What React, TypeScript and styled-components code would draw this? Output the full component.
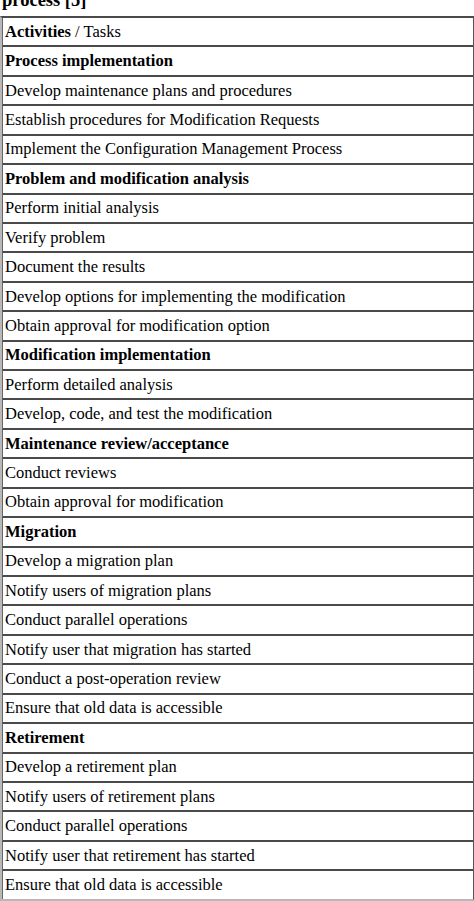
import React from 'react';
import styled, { createGlobalStyle } from 'styled-components';

const GlobalStyle = createGlobalStyle`
	html, body {
		margin: 0;
		padding: 0;
		background: #ffffff;
	}
	body {
		font-family: 'Liberation Serif', 'Times New Roman', serif;
		color: #000000;
		width: 474px;
		height: 901px;
		overflow: hidden;
	}
`;

type Row = { text: string; heading?: boolean };

const rows: Row[] = [
	{ text: 'Process implementation', heading: true },
	{ text: 'Develop maintenance plans and procedures' },
	{ text: 'Establish procedures for Modification Requests' },
	{ text: 'Implement the Configuration Management Process' },
	{ text: 'Problem and modification analysis', heading: true },
	{ text: 'Perform initial analysis' },
	{ text: 'Verify problem' },
	{ text: 'Document the results' },
	{ text: 'Develop options for implementing the modification' },
	{ text: 'Obtain approval for modification option' },
	{ text: 'Modification implementation', heading: true },
	{ text: 'Perform detailed analysis' },
	{ text: 'Develop, code, and test the modification' },
	{ text: 'Maintenance review/acceptance', heading: true },
	{ text: 'Conduct reviews' },
	{ text: 'Obtain approval for modification' },
	{ text: 'Migration', heading: true },
	{ text: 'Develop a migration plan' },
	{ text: 'Notify users of migration plans' },
	{ text: 'Conduct parallel operations' },
	{ text: 'Notify user that migration has started' },
	{ text: 'Conduct a post-operation review' },
	{ text: 'Ensure that old data is accessible' },
	{ text: 'Retirement', heading: true },
	{ text: 'Develop a retirement plan' },
	{ text: 'Notify users of retirement plans' },
	{ text: 'Conduct parallel operations' },
	{ text: 'Notify user that retirement has started' },
	{ text: 'Ensure that old data is accessible' },
];

const Page = styled.div`
	display: flex;
	flex-direction: column;
	width: 474px;
`;

const Caption = styled.div`
	height: 16px;
	overflow: hidden;
	display: flex;
	align-items: flex-end;
	padding-left: 2px;
	font-size: 18.5px;
	font-weight: bold;
	line-height: 18px;

	span {
		margin-bottom: -2px;
		transform: translateY(-9px);
	}
`;

const Table = styled.div`
	display: flex;
	flex-direction: column;
	width: 471px;
	border-top: 2px solid #4a4a4a;
	border-left: 2px solid #b8b8b8;
	border-right: 2px solid #555555;
	border-bottom: 2px solid #b8b8b8;
`;

const Cell = styled.div<{ $heading?: boolean }>`
	height: 27.43px;
	display: flex;
	align-items: center;
	padding-left: 2px;
	border-left: 1px solid #666666;
	border-bottom: 2px solid #4a4a4a;
	font-size: 16.5px;
	font-weight: ${p => (p.$heading ? 'bold' : 'normal')};
	white-space: nowrap;

	&:last-child {
		border-bottom: none;
	}

	b {
		font-weight: bold;
	}
`;

export default function App() {
	return (
		<Page>
			<GlobalStyle />
			<Caption>
				<span>process [5]</span>
			</Caption>
			<Table>
				<Cell>
					<b>Activities</b>&nbsp;/ Tasks
				</Cell>
				{rows.map((r, i) => (
					<Cell
						key={i}
						$heading={r.heading}
					>
						{r.text}
					</Cell>
				))}
			</Table>
		</Page>
	);
}
